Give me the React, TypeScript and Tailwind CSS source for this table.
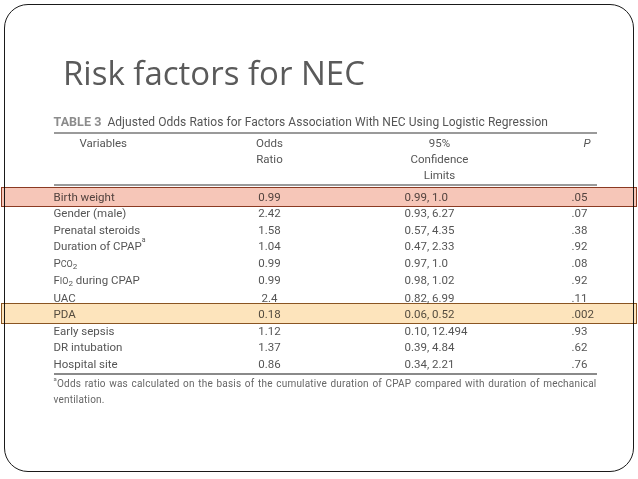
import React from 'react';

// Row data: variable label, odds ratio, confidence limits, P
type Row = { label: React.ReactNode; odds: string; ci: string; p: string };

const rows: Row[] = [
  { label: 'Birth weight', odds: '0.99', ci: '0.99, 1.0', p: '.05' },
  { label: 'Gender (male)', odds: '2.42', ci: '0.93, 6.27', p: '.07' },
  { label: 'Prenatal steroids', odds: '1.58', ci: '0.57, 4.35', p: '.38' },
  {
    label: (
      <>
        Duration of CPAP<sup className="text-[7px] align-top relative top-[2px]">a</sup>
      </>
    ),
    odds: '1.04',
    ci: '0.47, 2.33',
    p: '.92',
  },
  {
    label: (
      <>
        P<span className="text-[9px]">CO</span>
        <sub className="text-[8px]">2</sub>
      </>
    ),
    odds: '0.99',
    ci: '0.97, 1.0',
    p: '.08',
  },
  {
    label: (
      <>
        F<span className="text-[9px]">IO</span>
        <sub className="text-[8px]">2</sub> during CPAP
      </>
    ),
    odds: '0.99',
    ci: '0.98, 1.02',
    p: '.92',
  },
  { label: 'UAC', odds: '2.4', ci: '0.82, 6.99', p: '.11' },
  { label: 'PDA', odds: '0.18', ci: '0.06, 0.52', p: '.002' },
  { label: 'Early sepsis', odds: '1.12', ci: '0.10, 12.494', p: '.93' },
  { label: 'DR intubation', odds: '1.37', ci: '0.39, 4.84', p: '.62' },
  { label: 'Hospital site', odds: '0.86', ci: '0.34, 2.21', p: '.76' },
];

const cols = 'grid grid-cols-[186px_60px_272px_25px]';

export default function App() {
  return (
    <div className="relative w-[638px] h-[479px] bg-white p-[4px] overflow-hidden">
      {/* Slide frame */}
      <div className="w-[630px] h-[468px] border-[1.5px] border-[#1a1a1a] rounded-[24px]">
        {/* Title */}
        <h1 className="pt-[48px] pl-[58px] text-[33px] leading-[40px] text-[#5a5a5a] font-['Open_Sans',sans-serif]">
          Risk factors for NEC
        </h1>

        {/* Table */}
        <div className="ml-[48.5px] mt-[21px] w-[543px] font-['Roboto',sans-serif] text-[#555]">
          <div className="text-[12px] leading-[16px] tracking-[0.05px] whitespace-nowrap">
            <span className="font-bold text-[12.5px] text-[#8c8c8c]">TABLE 3</span>
            <span className="ml-[6px]">
              Adjusted Odds Ratios for Factors Association With NEC Using Logistic Regression
            </span>
          </div>
          <div className="mt-[2px] h-[2px] bg-[#9a9a9a]" />

          {/* Header */}
          <div className={`${cols} text-[11.5px] leading-[16px] pt-[1px] pb-[1px]`}>
            <div className="pl-[26px]">Variables</div>
            <div className="text-center">
              Odds
              <br />
              Ratio
            </div>
            <div className="pl-[105px]">
              <div className="w-[70px] text-center">
                95%
                <br />
                Confidence
                <br />
                Limits
              </div>
            </div>
            <div className="pl-[12px] italic">P</div>
          </div>
          <div className="h-[1.5px] bg-[#9a9a9a]" />

          {/* Body */}
          <div className="pt-[3px]">
            {rows.map((r, i) => (
              <div key={i} className={`${cols} text-[11.5px] leading-[16.5px]`}>
                <div className="whitespace-nowrap">{r.label}</div>
                <div className="text-center">{r.odds}</div>
                <div className="pl-[105px] whitespace-nowrap">{r.ci}</div>
                <div>{r.p}</div>
              </div>
            ))}
          </div>
          <div className="mt-[1px] h-[2px] bg-[#8a8a8a]" />

          {/* Footnote */}
          <div className="pt-[1px] text-[10px] leading-[16px] tracking-[0.2px] text-[#666]">
            <div className="text-justify [text-align-last:justify]">
              <sup className="text-[6px] align-top relative top-[3px]">a</sup>Odds ratio was calculated on the basis
              of the cumulative duration of CPAP compared with duration of mechanical
            </div>
            <div>ventilation.</div>
          </div>
        </div>
      </div>

      {/* Highlight overlays */}
      <div className="absolute left-[1px] top-[187px] w-[636px] h-[20px] border-[1.5px] border-[#8b3a22] bg-[#f6c6b8] mix-blend-multiply" />
      <div className="absolute left-[1px] top-[303px] w-[636px] h-[21px] border-[1.5px] border-[#8a5522] bg-[#fde4bc] mix-blend-multiply" />
    </div>
  );
}
